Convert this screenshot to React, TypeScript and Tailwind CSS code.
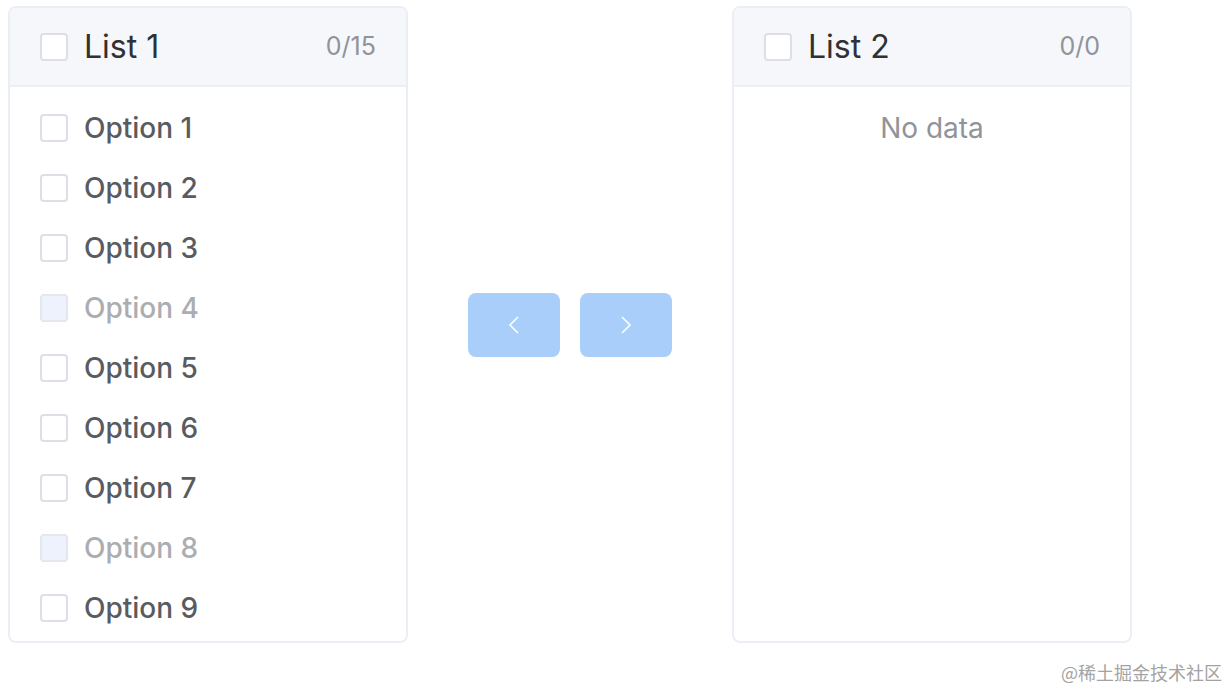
const options = [
  { label: "Option 1" },
  { label: "Option 2" },
  { label: "Option 3" },
  { label: "Option 4", disabled: true },
  { label: "Option 5" },
  { label: "Option 6" },
  { label: "Option 7" },
  { label: "Option 8", disabled: true },
  { label: "Option 9" },
];

function Box({ disabled }: { disabled?: boolean }) {
  return (
    <span
      className={
        "block w-[28px] h-[28px] rounded-[4px] border-2 shrink-0 " +
        (disabled ? "border-[#e4e7ed] bg-[#edf2fc]" : "border-[#dcdfe6] bg-white")
      }
    />
  );
}

function Panel({ title, count, children }: { title: string; count: string; children: React.ReactNode }) {
  return (
    <div className="w-[400px] h-[637px] border-2 border-[#ebeef5] rounded-[8px] overflow-hidden bg-white flex flex-col">
      <div className="h-[79px] shrink-0 bg-[#f5f7fa] border-b-2 border-[#ebeef5] flex items-center pl-[30px] pr-[30px]">
        <Box />
        <span className="ml-[16px] text-[32px] text-[#303133] leading-none">{title}</span>
        <span className="ml-auto text-[25px] text-[#909399] leading-none">{count}</span>
      </div>
      <div className="flex-1 pt-[11px]">{children}</div>
    </div>
  );
}

export default function App() {
  return (
    <div
      className="relative w-[1228px] h-[690px] bg-white overflow-hidden"
      style={{ fontFamily: 'Inter, "Noto Sans", sans-serif' }}
    >
      <div className="flex items-center pl-[8px] pt-[6px]">
        <Panel title="List 1" count="0/15">
          {options.map((o) => (
            <label key={o.label} className="flex items-center h-[60px] pl-[30px]">
              <Box disabled={o.disabled} />
              <span
                className={
                  "ml-[16px] text-[28px] font-medium leading-none " +
                  (o.disabled ? "text-[#abadb1]" : "text-[#595b60]")
                }
              >
                {o.label}
              </span>
            </label>
          ))}
        </Panel>
        <div className="flex gap-[20px] mx-[60px]">
          <button className="w-[92px] h-[64px] rounded-[8px] bg-[#a9cefa] flex items-center justify-center">
            <svg width="14" height="24" viewBox="0 0 14 24" fill="none" stroke="white" strokeWidth="1.6">
              <path d="M11 4 L3 12 L11 20" />
            </svg>
          </button>
          <button className="w-[92px] h-[64px] rounded-[8px] bg-[#a9cefa] flex items-center justify-center">
            <svg width="14" height="24" viewBox="0 0 14 24" fill="none" stroke="white" strokeWidth="1.6">
              <path d="M3 4 L11 12 L3 20" />
            </svg>
          </button>
        </div>
        <Panel title="List 2" count="0/0">
          <div className="h-[60px] flex items-center justify-center text-[28px] text-[#909399]">No data</div>
        </Panel>
      </div>
      <div
        className="absolute right-[6px] bottom-[4px] text-[18px] text-[#a3a3a3]"
        style={{ fontFamily: '"Noto Sans CJK SC", sans-serif' }}
      >
        @稀土掘金技术社区
      </div>
    </div>
  );
}
